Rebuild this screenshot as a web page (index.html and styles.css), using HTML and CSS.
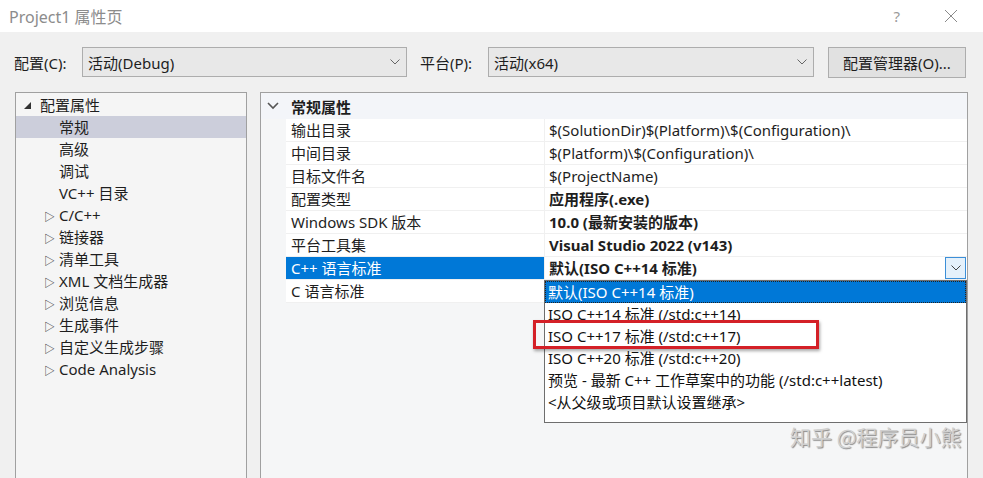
FILE: index.html
```html
<!DOCTYPE html>
<html lang="zh-CN">
<head>
    <meta charset="UTF-8">
    <title>Project1 属性页</title>
    <link rel="stylesheet" href="styles.css">
</head>
<body>
    <div class="titlebar">
        <span class="title">Project1 属性页</span>
        <span class="help">?</span>
        <svg class="close" width="14" height="14" viewBox="0 0 14 14">
            <path d="M1 1 L13 13 M13 1 L1 13" stroke="#8a8a8a" stroke-width="1" fill="none"/>
        </svg>
    </div>

    <div class="toolbar">
        <label class="lbl lbl-config">配置(C):</label>
        <div class="combo combo-config">
            <span>活动(Debug)</span>
            <svg width="10" height="6" viewBox="0 0 10 6"><path d="M0.5 0.5 L5 5 L9.5 0.5" stroke="#666" fill="none"/></svg>
        </div>
        <label class="lbl lbl-platform">平台(P):</label>
        <div class="combo combo-platform">
            <span>活动(x64)</span>
            <svg width="10" height="6" viewBox="0 0 10 6"><path d="M0.5 0.5 L5 5 L9.5 0.5" stroke="#666" fill="none"/></svg>
        </div>
        <button class="manager">配置管理器(O)...</button>
    </div>

    <div class="main">
        <div class="tree">
            <div class="node root"><span class="tri-open"></span>配置属性</div>
            <div class="node child selected">常规</div>
            <div class="node child">高级</div>
            <div class="node child">调试</div>
            <div class="node child">VC++ 目录</div>
            <div class="node group"><span class="tri">▷</span>C/C++</div>
            <div class="node group"><span class="tri">▷</span>链接器</div>
            <div class="node group"><span class="tri">▷</span>清单工具</div>
            <div class="node group"><span class="tri">▷</span>XML 文档生成器</div>
            <div class="node group"><span class="tri">▷</span>浏览信息</div>
            <div class="node group"><span class="tri">▷</span>生成事件</div>
            <div class="node group"><span class="tri">▷</span>自定义生成步骤</div>
            <div class="node group"><span class="tri">▷</span>Code Analysis</div>
        </div>

        <div class="grid-panel">
            <div class="grid-head">
                <svg class="chev" width="12" height="8" viewBox="0 0 12 8"><path d="M1 1 L6 6 L11 1" stroke="#555" stroke-width="1.6" fill="none"/></svg>
                <span>常规属性</span>
            </div>
            <div class="prop"><div class="name">输出目录</div><div class="value">$(SolutionDir)$(Platform)\$(Configuration)\</div></div>
            <div class="prop"><div class="name">中间目录</div><div class="value">$(Platform)\$(Configuration)\</div></div>
            <div class="prop"><div class="name">目标文件名</div><div class="value">$(ProjectName)</div></div>
            <div class="prop"><div class="name">配置类型</div><div class="value bold">应用程序(.exe)</div></div>
            <div class="prop"><div class="name">Windows SDK 版本</div><div class="value bold">10.0 (最新安装的版本)</div></div>
            <div class="prop"><div class="name">平台工具集</div><div class="value bold">Visual Studio 2022 (v143)</div></div>
            <div class="prop active">
                <div class="name">C++ 语言标准</div>
                <div class="value bold">默认(ISO C++14 标准)
                    <span class="drop-btn"><svg width="10" height="6" viewBox="0 0 10 6"><path d="M0.5 0.5 L5 5 L9.5 0.5" stroke="#444" fill="none"/></svg></span>
                </div>
            </div>
            <div class="prop"><div class="name">C 语言标准</div><div class="value"></div></div>

            <ul class="dropdown">
                <li class="picked">默认(ISO C++14 标准)</li>
                <li>ISO C++14 标准 (/std:c++14)</li>
                <li>ISO C++17 标准 (/std:c++17)</li>
                <li>ISO C++20 标准 (/std:c++20)</li>
                <li>预览 - 最新 C++ 工作草案中的功能 (/std:c++latest)</li>
                <li>&lt;从父级或项目默认设置继承&gt;</li>
            </ul>
            <div class="highlight"></div>
        </div>
    </div>

    <div class="watermark">知乎 @程序员小熊</div>
</body>
</html>
```

FILE: styles.css
```css
body {
    margin: 0;
    width: 983px;
    height: 478px;
    overflow: hidden;
    background-color: #f0f0f0;
    color: #1e1e1e;
    font-family: "Noto Sans", "Noto Sans CJK SC", sans-serif;
    font-size: 15px;
    position: relative;
}
.titlebar {
    height: 32px;
    background-color: #fff;
    display: flex;
    align-items: center;
    padding: 0 25px 0 9px;
}
.title {
    color: #8c8c8c;
    font-size: 16px;
    flex: 1;
}
.help {
    color: #9a9a9a;
    font-size: 15px;
    margin-right: 44px;
}
.toolbar {
    height: 60px;
    display: flex;
    align-items: center;
    padding-left: 14px;
    box-sizing: border-box;
}
.lbl {
    width: 68px;
}
.lbl-platform {
    margin-left: 13px;
}
.combo {
    height: 28px;
    border: 1px solid #adadad;
    background-color: #e8e8e8;
    display: flex;
    align-items: center;
    justify-content: space-between;
    padding: 0 6px 0 5px;
    box-sizing: content-box;
}
.combo-config {
    width: 312px;
}
.combo-platform {
    width: 313px;
}
.manager {
    margin-left: 14px;
    width: 138px;
    height: 31px;
    border: 1px solid #adadad;
    background-color: #e1e1e1;
    font-family: inherit;
    font-size: 15px;
    color: #1e1e1e;
    padding: 0;
}
.main {
    display: flex;
    padding-left: 15px;
    gap: 13px;
    height: 386px;
}
.tree {
    width: 230px;
    border: 1px solid #a0a0a0;
    border-bottom: none;
    background-color: #f5f5f5;
    padding-top: 1px;
}
.node {
    height: 22px;
    line-height: 22px;
    white-space: nowrap;
}
.root {
    padding-left: 8px;
    display: flex;
    align-items: center;
}
.tri-open {
    width: 0;
    height: 0;
    border-left: 7px solid transparent;
    border-bottom: 7px solid #333;
    margin-right: 9px;
    margin-top: 1px;
}
.child {
    padding-left: 43px;
}
.selected {
    background-color: #cccedb;
}
.group {
    padding-left: 28px;
}
.tri {
    display: inline-block;
    width: 15px;
    font-size: 11px;
    color: #333;
}
.grid-panel {
    width: 706px;
    border: 1px solid #a0a0a0;
    border-bottom: none;
    background-color: #f5f6f7;
    position: relative;
}
.grid-head {
    height: 26px;
    display: flex;
    align-items: center;
    font-weight: bold;
    background-color: #f3f5f9;
}
.chev {
    margin: 0 12px 0 6px;
}
.prop {
    display: flex;
    height: 23px;
    line-height: 22px;
    margin-left: 25px;
    background-color: #fff;
    border-bottom: 1px solid #f0f0f0;
    box-sizing: border-box;
}
.name {
    width: 253px;
    padding-left: 5px;
    border-right: 1px solid #f0f0f0;
    white-space: nowrap;
}
.value {
    flex: 1;
    padding-left: 4px;
    white-space: nowrap;
    position: relative;
}
.bold {
    font-weight: bold;
}
.active .name {
    background-color: #0078d7;
    color: #fff;
}
.drop-btn {
    position: absolute;
    right: 1px;
    top: 0;
    width: 19px;
    height: 20px;
    border: 1px solid #3c8fd8;
    background-color: #e5f1fb;
    display: flex;
    align-items: center;
    justify-content: center;
}
.dropdown {
    position: absolute;
    left: 283px;
    top: 187px;
    width: 421px;
    height: 141px;
    margin: 0;
    padding: 0;
    list-style: none;
    background-color: #fff;
    border: 1px solid #6e6e6e;
    color: #111;
}
.dropdown li {
    height: 22px;
    line-height: 22px;
    padding-left: 3px;
    white-space: nowrap;
}
.dropdown .picked {
    background-color: #0078d7;
    color: #fff;
    outline: 1px dotted #222;
    outline-offset: -1px;
}
.highlight {
    position: absolute;
    left: 272px;
    top: 227px;
    width: 280px;
    height: 23px;
    border: 3px solid #d42027;
    box-shadow: 1px 2px 3px rgba(0, 0, 0, 0.35);
}
.watermark {
    position: absolute;
    left: 790px;
    top: 421px;
    font-family: "Noto Sans CJK SC", sans-serif;
    font-size: 21px;
    white-space: nowrap;
    color: #d0d0d0;
    text-shadow: 1px 1px 1px #8a8a8a;
}
```
